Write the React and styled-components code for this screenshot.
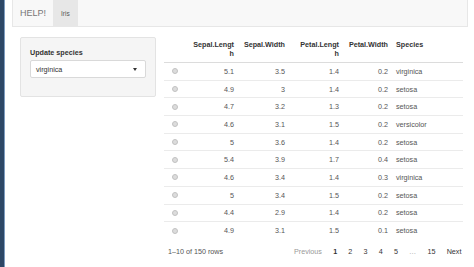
import React from "react";
import styled, { createGlobalStyle } from "styled-components";

const Global = createGlobalStyle`
  html, body { margin: 0; padding: 0; background: #fff; }
  body { font-family: "Liberation Sans", Arial, sans-serif; color: #333; font-size: 7.2px; }
  * { box-sizing: border-box; }
`;

const Shell = styled.div`
  display: flex;
  min-height: 267px;
`;

const EdgeStrip = styled.div`
  width: 5px;
  flex: none;
  background: #2d4766;
  border-right: 1px solid #7d9cc0;
`;

const Page = styled.div`
  flex: 1;
  padding: 0 6px 0 7px;
`;

const Navbar = styled.nav`
  height: 27px;
  display: flex;
  align-items: stretch;
  background: #f8f8f8;
  border: 1px solid #e7e7e7;
  border-top: none;
  padding-left: 7px;
`;

const Brand = styled.span`
  display: flex;
  align-items: center;
  font-size: 9px;
  color: #777;
  margin-right: 7px;
`;

const NavTab = styled.span`
  display: flex;
  align-items: center;
  padding: 0 8px;
  font-size: 6.5px;
  color: #555;
  background: ${(p) => (p.$active ? "#e7e7e7" : "transparent")};
`;

const Content = styled.div`
  display: grid;
  grid-template-columns: 136px 1fr;
  column-gap: 8px;
  padding: 10px 5px 0 8px;
  align-items: start;
`;

const Well = styled.div`
  height: 60px;
  background: #f5f5f5;
  border: 1px solid #e3e3e3;
  border-radius: 2px;
  padding: 10px 9px 0 9px;
`;

const Label = styled.div`
  font-weight: bold;
  font-size: 7.2px;
  line-height: 9px;
  margin-bottom: 3px;
`;

const Select = styled.div`
  height: 18px;
  background: #fff;
  border: 1px solid #d9d9d9;
  border-radius: 2px;
  display: flex;
  align-items: center;
  justify-content: space-between;
  padding: 0 8px 0 5px;
  font-size: 7.2px;
  color: #333;
`;

const Caret = styled.span`
  width: 0;
  height: 0;
  border-left: 2.5px solid transparent;
  border-right: 2.5px solid transparent;
  border-top: 3px solid #333;
`;

const Main = styled.div`
  min-width: 0;
`;

const Table = styled.table`
  width: 299px;
  table-layout: fixed;
  border-collapse: collapse;
  font-size: 7.2px;
`;

const Th = styled.th`
  font-weight: bold;
  line-height: 9px;
  vertical-align: top;
  text-align: ${(p) => p.$align || "right"};
  padding: 3px 5px 4px ${(p) => p.$pl ?? 3}px;
  border-bottom: 1px solid #dcdcdc;
  overflow-wrap: anywhere;
  color: #333;
`;

const Td = styled.td`
  height: 17.7px;
  line-height: 9px;
  padding: 0 5px 0 3px;
  text-align: ${(p) => p.$align || "right"};
  vertical-align: middle;
  border-top: 1px solid #ebebeb;
  color: #555;
`;

const Radio = styled.span`
  display: block;
  margin: 0 auto;
  width: 6px;
  height: 6px;
  border-radius: 50%;
  background: #dcdcdc;
  border: 1px solid #c2c2c2;
`;

const Footer = styled.div`
  display: flex;
  justify-content: space-between;
  align-items: center;
  margin-top: 8px;
  margin-right: -4px;
  padding-left: 4px;
  line-height: 9px;
`;

const Info = styled.span`
  color: #555;
`;

const Pager = styled.div`
  display: flex;
`;

const PageBtn = styled.span`
  padding: 0 ${(p) => p.$px ?? 5.6}px;
  color: ${(p) => (p.$disabled ? "#999" : "#333")};
  font-weight: ${(p) => (p.$current ? "bold" : "normal")};
`;

const columns = [
  { key: "sl", label: "Sepal.Length", w: 51 },
  { key: "sw", label: "Sepal.Width", w: 51 },
  { key: "pl", label: "Petal.Length", w: 54, pl: 8 },
  { key: "pw", label: "Petal.Width", w: 49 },
  { key: "sp", label: "Species", w: 70, align: "left" },
];

const rows = [
  ["5.1", "3.5", "1.4", "0.2", "virginica"],
  ["4.9", "3", "1.4", "0.2", "setosa"],
  ["4.7", "3.2", "1.3", "0.2", "setosa"],
  ["4.6", "3.1", "1.5", "0.2", "versicolor"],
  ["5", "3.6", "1.4", "0.2", "setosa"],
  ["5.4", "3.9", "1.7", "0.4", "setosa"],
  ["4.6", "3.4", "1.4", "0.3", "virginica"],
  ["5", "3.4", "1.5", "0.2", "setosa"],
  ["4.4", "2.9", "1.4", "0.2", "setosa"],
  ["4.9", "3.1", "1.5", "0.1", "setosa"],
];

export default function App() {
  return (
    <>
      <Global />
      <Shell>
        <EdgeStrip />
        <Page>
          <Navbar>
            <Brand>HELP!</Brand>
            <NavTab $active>Iris</NavTab>
          </Navbar>
          <Content>
            <Well>
              <Label>Update species</Label>
              <Select>
                <span>virginica</span>
                <Caret />
              </Select>
            </Well>
            <Main>
              <Table>
                <colgroup>
                  <col style={{ width: 24 }} />
                  {columns.map((c) => (
                    <col key={c.key} style={{ width: c.w }} />
                  ))}
                </colgroup>
                <thead>
                  <tr>
                    <Th />
                    {columns.map((c) => (
                      <Th key={c.key} $align={c.align} $pl={c.pl}>
                        {c.label}
                      </Th>
                    ))}
                  </tr>
                </thead>
                <tbody>
                  {rows.map((r, i) => (
                    <tr key={i}>
                      <Td $align="center">
                        <Radio />
                      </Td>
                      {r.map((v, j) => (
                        <Td key={j} $align={columns[j].align}>
                          {v}
                        </Td>
                      ))}
                    </tr>
                  ))}
                </tbody>
              </Table>
              <Footer>
                <Info>1–10 of 150 rows</Info>
                <Pager>
                  <PageBtn $disabled>Previous</PageBtn>
                  <PageBtn $current>1</PageBtn>
                  <PageBtn>2</PageBtn>
                  <PageBtn>3</PageBtn>
                  <PageBtn>4</PageBtn>
                  <PageBtn>5</PageBtn>
                  <PageBtn $disabled>…</PageBtn>
                  <PageBtn>15</PageBtn>
                  <PageBtn>Next</PageBtn>
                </Pager>
              </Footer>
            </Main>
          </Content>
        </Page>
      </Shell>
    </>
  );
}
